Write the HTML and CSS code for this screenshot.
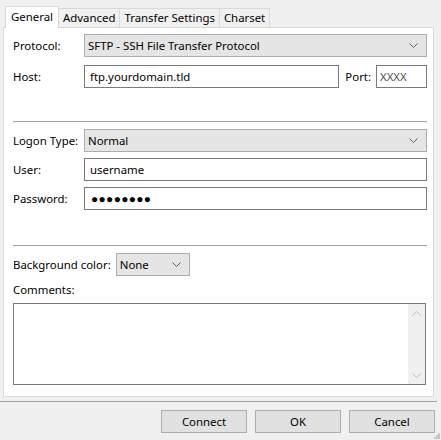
FILE: index.html
```html
<!DOCTYPE html>
<html>
<head>
    <title>Site Manager</title>
    <link rel="stylesheet" href="styles.css">
</head>
<body>
    <div class="tabs">
        <div class="tab active">General</div>
        <div class="tab">Advanced</div>
        <div class="tab">Transfer Settings</div>
        <div class="tab">Charset</div>
    </div>
    <div class="panel">
        <div class="row">
            <label class="lbl">Protocol:</label>
            <div class="combo grow">
                <span>SFTP - SSH File Transfer Protocol</span>
                <svg class="chev" width="9" height="5" viewBox="0 0 9 5"><path d="M0.5 0.5 L4.5 4.5 L8.5 0.5" fill="none" stroke="#606060"/></svg>
            </div>
        </div>
        <div class="row host">
            <label class="lbl">Host:</label>
            <div class="field grow">ftp.yourdomain.tld</div>
            <label class="port-lbl">Port:</label>
            <div class="field port">XXXX</div>
        </div>
        <hr class="sep">
        <div class="group">
            <div class="row">
                <label class="lbl">Logon Type:</label>
                <div class="combo grow">
                    <span>Normal</span>
                    <svg class="chev" width="9" height="5" viewBox="0 0 9 5"><path d="M0.5 0.5 L4.5 4.5 L8.5 0.5" fill="none" stroke="#606060"/></svg>
                </div>
            </div>
            <div class="row">
                <label class="lbl">User:</label>
                <div class="field grow">username</div>
            </div>
            <div class="row">
                <label class="lbl">Password:</label>
                <div class="field grow dots">&#9679;&#9679;&#9679;&#9679;&#9679;&#9679;&#9679;&#9679;</div>
            </div>
        </div>
        <hr class="sep lower">
        <div class="row">
            <label class="bg-lbl">Background color:</label>
            <div class="combo small">
                <span>None</span>
                <svg class="chev" width="9" height="5" viewBox="0 0 9 5"><path d="M0.5 0.5 L4.5 4.5 L8.5 0.5" fill="none" stroke="#606060"/></svg>
            </div>
        </div>
        <div class="comments-lbl">Comments:</div>
        <div class="memo">
            <div class="memo-text"></div>
            <div class="scroll">
                <svg width="9" height="5" viewBox="0 0 9 5"><path d="M0.5 4.5 L4.5 0.5 L8.5 4.5" fill="none" stroke="#b8b8b8"/></svg>
                <svg width="9" height="5" viewBox="0 0 9 5"><path d="M0.5 0.5 L4.5 4.5 L8.5 0.5" fill="none" stroke="#b8b8b8"/></svg>
            </div>
        </div>
    </div>
    <div class="footer">
        <button class="btn">Connect</button>
        <button class="btn">OK</button>
        <button class="btn">Cancel</button>
        <svg class="grip" width="6" height="6" viewBox="0 0 6 6">
            <rect x="4" y="0" width="2" height="2" fill="#c8c8c8"/>
            <rect x="2" y="2" width="2" height="2" fill="#c8c8c8"/>
            <rect x="4" y="2" width="2" height="2" fill="#c8c8c8"/>
            <rect x="0" y="4" width="2" height="2" fill="#c8c8c8"/>
            <rect x="2" y="4" width="2" height="2" fill="#c8c8c8"/>
            <rect x="4" y="4" width="2" height="2" fill="#c8c8c8"/>
        </svg>
    </div>
</body>
</html>
```

FILE: styles.css
```css
body {
    margin: 0;
    background: #f0f0f0;
    font-family: "Segoe UI", "Noto Sans", sans-serif;
    font-size: 11.4px;
    color: #000;
    width: 441px;
    height: 440px;
    overflow: hidden;
    position: relative;
}

.tabs {
    display: flex;
    align-items: flex-end;
    height: 27px;
    padding-left: 5px;
    box-sizing: border-box;
}

.tab {
    height: 19px;
    line-height: 18px;
    padding: 0 4px;
    border: 1px solid #d9d9d9;
    border-bottom: none;
    margin-left: -1px;
    background: #f0f0f0;
    box-sizing: border-box;
}

.tab:first-child {
    margin-left: 0;
}

.tab.active {
    height: 22px;
    line-height: 20px;
    padding: 0 5px;
    background: #fff;
    position: relative;
    top: 1px;
    margin-right: -1px;
    z-index: 1;
}

.tab.active + .tab {
    margin-left: 0;
}

.panel {
    margin-left: 3px;
    width: 431px;
    height: 370px;
    border: 1px solid #d9d9d9;
    background: #fff;
    box-sizing: border-box;
    padding: 6px 6px 0 9px;
}

.row {
    display: flex;
    align-items: center;
    height: 23px;
}

.host {
    margin-top: 8px;
}

.lbl {
    width: 71px;
    flex: none;
}

.grow {
    flex: 1;
}

.combo {
    height: 23px;
    border: 1px solid #adadad;
    background: #e5e5e5;
    box-sizing: border-box;
    display: flex;
    align-items: center;
    justify-content: space-between;
    padding: 0 8px 0 3px;
}

.combo.small {
    width: 74px;
}

.field {
    height: 23px;
    border: 1px solid #7a7a7a;
    box-sizing: border-box;
    display: flex;
    align-items: center;
    padding: 0 5px;
    background: #fff;
}

.port-lbl {
    margin: 0 5px 0 6px;
}

.port {
    width: 51px;
    padding: 0 3px;
    color: #505050;
}

.dots {
    font-size: 12px;
    letter-spacing: 0.3px;
    padding-left: 6px;
}

.sep {
    border: none;
    border-top: 1px solid #a0a0a0;
    margin: 33px 0 7px 0;
}

.sep.lower {
    margin: 35px 0 7px 0;
}

.group {
    display: flex;
    flex-direction: column;
    gap: 6px;
}

.bg-lbl {
    margin-right: 5px;
}

.comments-lbl {
    margin-top: 7px;
    height: 20px;
    line-height: 14px;
}

.memo {
    width: 413px;
    height: 82px;
    border: 1px solid #7a7a7a;
    box-sizing: border-box;
    display: flex;
}

.memo-text {
    flex: 1;
}

.scroll {
    width: 17px;
    background: #f0f0f0;
    display: flex;
    flex-direction: column;
    justify-content: space-between;
    align-items: center;
    padding: 7px 0 6px;
    box-sizing: border-box;
}

.footer {
    margin-top: 4px;
    border-top: 1px solid #a0a0a0;
    width: 437px;
    height: 40px;
    display: flex;
    justify-content: flex-end;
    align-items: flex-start;
    padding: 8px 2px 0 0;
    box-sizing: border-box;
    gap: 8px;
}

.btn {
    width: 86px;
    height: 23px;
    border: 1px solid #adadad;
    background: #e1e1e1;
    font: inherit;
    color: #000;
    padding: 0;
}

.grip {
    position: absolute;
    right: 1px;
    bottom: 1px;
}
```
